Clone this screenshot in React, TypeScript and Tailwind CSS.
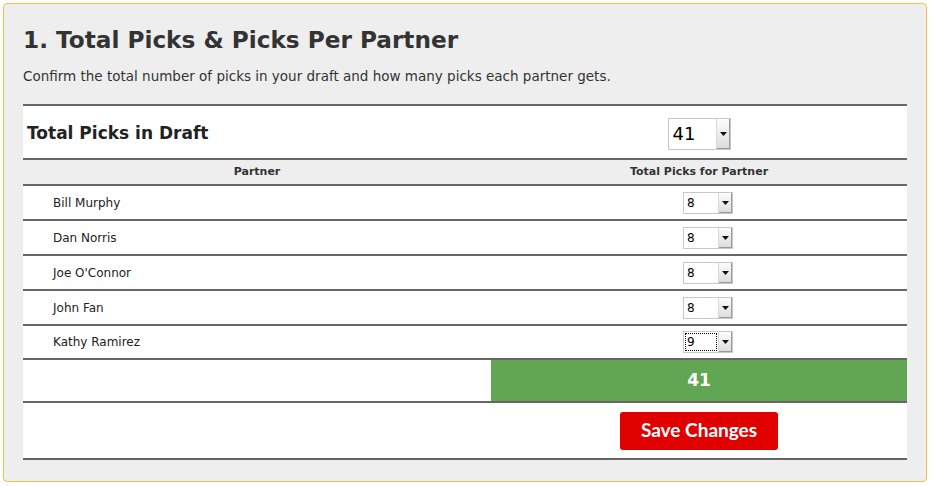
import React from "react";

const partners = [
  { name: "Bill Murphy", picks: 8 },
  { name: "Dan Norris", picks: 8 },
  { name: "Joe O'Connor", picks: 8 },
  { name: "John Fan", picks: 8 },
  { name: "Kathy Ramirez", picks: 9, focus: true },
];

function Arrow() {
  return (
    <div className="flex h-full w-[14px] items-center justify-center border-l border-[#d8d8d8] bg-gradient-to-b from-[#fdfdfd] to-[#dcdcdc] shadow-[inset_-1px_-1px_0_#9a9a9a]">
      <svg width="7" height="4" viewBox="0 0 7 4">
        <path d="M0 0h7L3.5 4z" fill="#111" />
      </svg>
    </div>
  );
}

function SmallSelect({ value, focus }: { value: number; focus?: boolean }) {
  return (
    <div className="flex h-[22px] w-[50px] items-stretch border border-[#c8c8c8] bg-white">
      <div className="flex flex-1 items-center pl-[2px]">
        <span
          className={`flex h-[16px] w-[30px] items-center pl-[1px] text-[12px] leading-none text-black ${
            focus ? "outline-1 outline-dotted outline-black" : ""
          }`}
        >
          {value}
        </span>
      </div>
      <Arrow />
    </div>
  );
}

export default function App() {
  return (
    <div className="h-[486px] w-[932px] bg-white p-[3px]" style={{ fontFamily: "'DejaVu Sans', sans-serif" }}>
      <div className="h-[479px] w-[924px] rounded-[4px] border border-[#f3c14a] bg-[#eeeeee] px-[19px] pt-[20px]">
        <h1 className="text-[23.2px] font-bold leading-[32px] text-[#333]">
          1. Total Picks &amp; Picks Per Partner
        </h1>
        <p className="mt-[11px] text-[13.5px] leading-[18px] text-[#333]">
          Confirm the total number of picks in your draft and how many picks each partner gets.
        </p>
        <div className="mt-[19px] w-[884px] border-t-2 border-[#666]">
          <div className="flex h-[52px] items-center bg-white pt-[3px]">
            <div className="w-[468px] pl-[4px] text-[17px] font-bold text-[#222]">Total Picks in Draft</div>
            <div className="flex w-[416px] justify-center">
              <div className="flex h-[32px] w-[63px] items-stretch border border-[#c8c8c8] bg-white">
                <div className="flex flex-1 items-center pl-[4px] text-[18px] text-black">41</div>
                <Arrow />
              </div>
            </div>
          </div>
          <div className="flex h-[26px] items-center border-t-2 border-[#666] bg-[#eeeeee] text-[11px] font-bold text-[#333]">
            <div className="w-[468px] text-center">Partner</div>
            <div className="w-[416px] text-center">Total Picks for Partner</div>
          </div>
          {partners.map((p, i) => (
            <div
              key={p.name}
              className={`flex items-center border-t-2 border-[#666] bg-white ${i === 4 ? "h-[34px]" : "h-[35px]"}`}
            >
              <div className="w-[468px] pl-[30px] text-[12px] text-[#222]">{p.name}</div>
              <div className="flex w-[416px] justify-center pl-[18px]">
                <SmallSelect value={p.picks} focus={p.focus} />
              </div>
            </div>
          ))}
          <div className="flex h-[43px] border-t-2 border-[#666] bg-white">
            <div className="w-[468px]" />
            <div className="flex w-[416px] items-center justify-center bg-[#61a753] text-[17px] font-bold text-white">
              41
            </div>
          </div>
          <div className="flex h-[59px] items-center border-y-2 border-[#666] bg-white">
            <div className="w-[468px]" />
            <div className="flex w-[416px] justify-center">
              <button
                className="h-[38px] w-[158px] rounded-[3px] bg-[#e00000] text-[19px] font-bold text-white"
                style={{ fontFamily: "Lato, sans-serif" }}
              >
                Save Changes
              </button>
            </div>
          </div>
        </div>
      </div>
    </div>
  );
}
